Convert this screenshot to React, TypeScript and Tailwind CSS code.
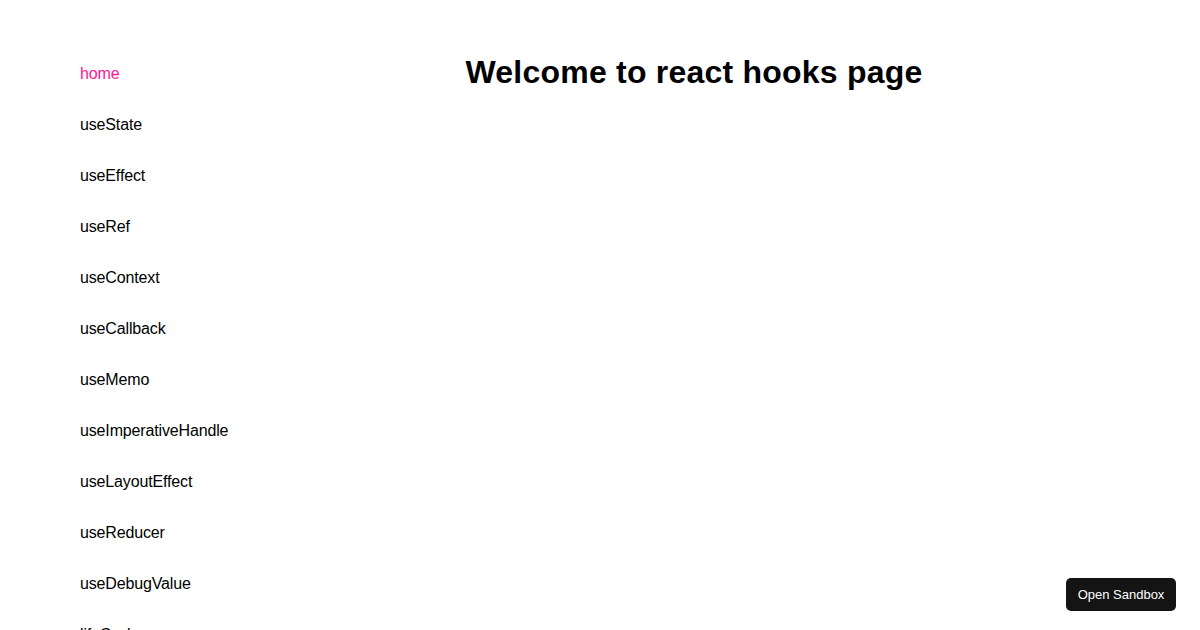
import React from "react";

const items = [
  "home",
  "useState",
  "useEffect",
  "useRef",
  "useContext",
  "useCallback",
  "useMemo",
  "useImperativeHandle",
  "useLayoutEffect",
  "useReducer",
  "useDebugValue",
  "lifeCycle",
];

export default function App() {
  return (
    <div className="min-h-screen bg-white text-black font-['Liberation_Sans',Arial,sans-serif]">
      <div className="flex">
        <nav className="w-[188px] shrink-0 pl-[80px] pt-[65px]">
          <ul className="flex flex-col gap-[33px]">
            {items.map((it, i) => (
              <li key={it} className="text-[16px] leading-[18px] tracking-[-0.15px]">
                <a className={i === 0 ? "text-[#ff1493]" : "text-black"}>{it}</a>
              </li>
            ))}
          </ul>
        </nav>
        <main className="flex-1 pt-[54px]">
          <h1 className="text-center text-[32px] font-bold leading-[37px] tracking-[0.22px]">Welcome to react hooks page</h1>
        </main>
      </div>
      <button className="fixed right-[24px] bottom-[19px] h-[33px] w-[110px] rounded-[5px] bg-[#141414] text-[13px] text-white font-['Liberation_Sans',Arial,sans-serif]">
        Open Sandbox
      </button>
    </div>
  );
}
